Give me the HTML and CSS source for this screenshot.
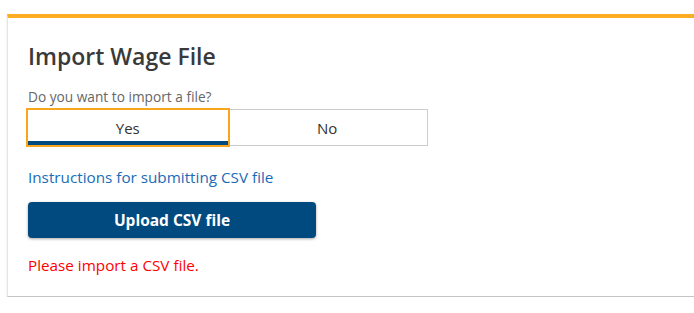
FILE: index.html
```html
<!DOCTYPE html>
<html>
<head>
<meta charset="utf-8">
<link rel="stylesheet" href="styles.css">
</head>
<body>
<section class="card">
  <h1 class="title">Import Wage File</h1>
  <div class="question">Do you want to import a file?</div>
  <div class="toggle">
    <button class="opt opt-active">Yes</button>
    <button class="opt">No</button>
  </div>
  <a class="link" href="#">Instructions for submitting CSV file</a>
  <button class="upload">Upload CSV file</button>
  <div class="error">Please import a CSV file.</div>
</section>
</body>
</html>
```
FILE: styles.css
```css
html, body {
  margin: 0;
  background: #fff;
}
body {
  padding: 14px 0 0 7px;
  font-family: "Open Sans", "Noto Sans", sans-serif;
  color: #333;
}
.card {
  border-top: 4px solid #fbad26;
  border-left: 1px solid #e6e6e6;
  border-bottom: 1px solid #c4c4c4;
  box-shadow: 0 1px 2px #e2e2e2;
  height: 283px;
  box-sizing: border-box;
  padding: 23px 0 0 20px;
  display: flex;
  flex-direction: column;
  align-items: flex-start;
}
.title {
  margin: 0;
  font-size: 23px;
  font-weight: 600;
  line-height: 30px;
  color: #3a3a3a;
}
.question {
  margin-top: 17px;
  font-size: 13.7px;
  line-height: 18px;
  color: #666;
}
.toggle {
  margin-top: 3px;
  display: flex;
  width: 401px;
  height: 37px;
  box-sizing: border-box;
  border: 1px solid #ccc;
  margin-left: -1px;
}
.opt {
  flex: 1;
  border: 0;
  background: #fff;
  font-family: inherit;
  font-size: 15px;
  color: #333;
  padding: 0;
  cursor: pointer;
}
.opt-active {
  position: relative;
  outline: 2px solid #f9a61c;
  outline-offset: 0;
  box-shadow: inset 0 -4px 0 #004a80;
}
.link {
  margin-top: 21px;
  font-size: 15.25px;
  line-height: 20px;
  color: #1a6cb8;
  text-decoration: none;
}
.upload {
  margin-top: 15px;
  width: 288px;
  height: 36px;
  border: 0;
  border-radius: 4px;
  background: #004a80;
  color: #fff;
  font-family: inherit;
  font-weight: 700;
  font-size: 15.5px;
  box-shadow: 0 1px 3px rgba(0,0,0,0.35);
}
.error {
  margin-top: 17px;
  font-size: 15.25px;
  line-height: 20px;
  color: #f00;
}
```
